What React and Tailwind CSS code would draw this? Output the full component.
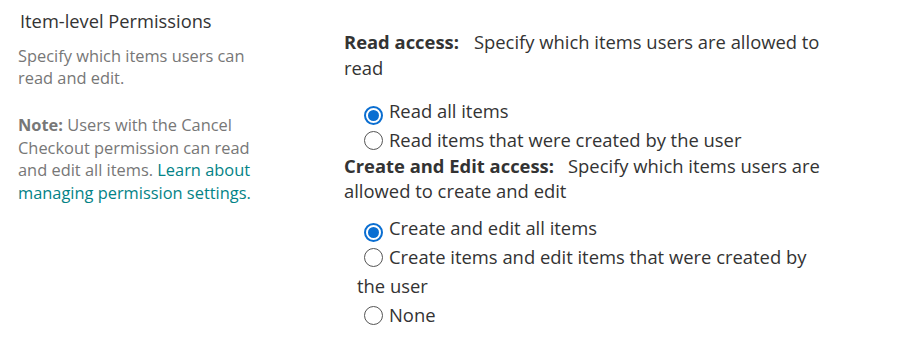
const Radio = ({ checked }) => (
  <span
    className={`inline-flex items-center justify-center w-[19px] h-[19px] rounded-full align-[-3px] ml-[7px] mr-[6px] bg-white ${
      checked ? "border-2 border-[#0a6ed1]" : "border border-[#555]"
    }`}
  >
    {checked && <span className="w-[11px] h-[11px] rounded-full bg-[#0a6ed1]"></span>}
  </span>
);

const Option = ({ checked, children }) => (
  <div className="pl-[13px] leading-[29px]">
    <Radio checked={checked} />
    {children}
  </div>
);

export default function App() {
  return (
    <div className="w-[922px] h-[358px] bg-white flex font-['Open_Sans',sans-serif]">
      {/* Left description */}
      <div className="w-[326px] pl-[18px] pt-[9px]">
        <h3 className="text-[18.3px] leading-[24px] text-[#333] pl-[2px]">Item-level Permissions</h3>
        <p className="mt-[12px] w-[242px] text-[16.4px] leading-[22px] text-[#777]">
          Specify which items users can read and edit.
        </p>
        <p className="mt-[25px] w-[242px] text-[16.4px] leading-[22.6px] text-[#777]">
          <span className="font-bold">Note:</span> Users with the Cancel Checkout permission can read and edit
          all items.{" "}
          <a href="#" className="text-[#038387]">
            Learn about managing permission settings.
          </a>
        </p>
      </div>

      {/* Right controls */}
      <div className="w-[500px] pl-[18px] pt-[29px] text-[18.4px] text-[#333]">
        <p className="leading-[26px]">
          <span className="font-bold">Read access:</span>
          <span className="ml-[15px]">Specify which items users are allowed to read</span>
        </p>
        <div className="mt-[15px]">
          <Option checked>Read all items</Option>
          <Option>Read items that were created by the user</Option>
        </div>
        <p className="leading-[25px] -mt-[1px]">
          <span className="font-bold">Create and Edit access:</span>
          <span className="ml-[14px]">Specify which items users are allowed to create and edit</span>
        </p>
        <div className="mt-[10px]">
          <Option checked>Create and edit all items</Option>
          <Option>Create items and edit items that were created by the user</Option>
          <Option>None</Option>
        </div>
      </div>
    </div>
  );
}
